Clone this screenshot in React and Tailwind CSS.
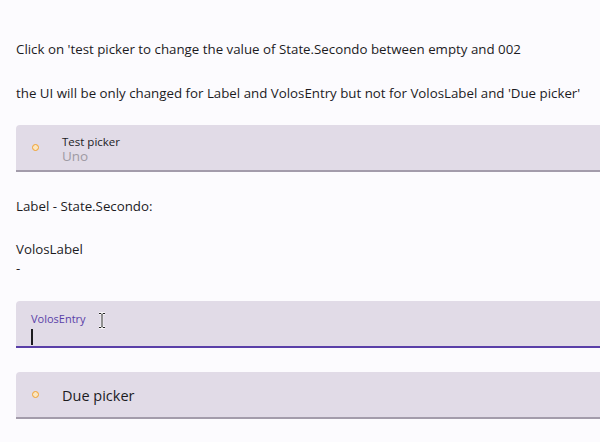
import React from 'react';

const font = { fontFamily: '"Open Sans", "Noto Sans", sans-serif' };

// piccolo anello arancione dei picker
const Dot = () => (
  <span className="block h-[7px] w-[7px] rounded-full border-[1.5px] border-[#f0a030] bg-[#fbe6c0]" />
);

const PickerBox = ({ children, className }) => (
  <div className={`ml-4 flex items-center rounded-tl-[4px] bg-[#e1dbe7] border-b-2 border-[#a39cab] ${className}`}>
    <div className="w-[46px] flex justify-start pl-[16px]">
      <Dot />
    </div>
    {children}
  </div>
);

export default function App() {
  return (
    <div className="w-[600px] h-[442px] overflow-hidden bg-[#fcfbfe] text-[#1c1b1f]" style={font}>
      <p className="pl-4 pt-[39px] text-[13.3px] leading-[20px] whitespace-nowrap">
        Click on 'test picker to change the value of State.Secondo between empty and 002
      </p>
      <p className="pl-4 mt-[24px] text-[13.3px] leading-[20px] whitespace-nowrap">
        the UI will be only changed for Label and VolosEntry but not for VolosLabel and 'Due picker'
      </p>

      <PickerBox className="mt-[22px] h-[47px]">
        <div className="flex flex-col pt-[3px]">
          <span className="text-[11.5px] leading-[15px] text-[#1c1b1f]">Test picker</span>
          <span className="text-[13.5px] leading-[15px] text-[#9e9aa3]">Uno</span>
        </div>
      </PickerBox>

      <p className="pl-4 mt-[24px] text-[13.3px] leading-[20px]">Label - State.Secondo:</p>

      <p className="pl-4 mt-[23px] text-[13.3px] leading-[20px]">VolosLabel</p>
      <p className="pl-4 text-[13.3px] leading-[19px]">-</p>

      <div className="ml-4 mt-[23px] h-[47px] rounded-tl-[4px] bg-[#e1dbe7] border-b-2 border-[#5a3fa8] pl-[15px] pt-[11px] relative">
        <span className="block text-[11px] leading-[14px] text-[#5a3fa8]">VolosEntry</span>
        <span className="block mt-[3px] h-[16px] w-[1.5px] bg-[#1c1b1f]" />
        {/* cursore I-beam del mouse */}
        <svg className="absolute left-[82px] top-[11px]" width="8" height="17" viewBox="0 0 8 17">
          <path d="M1 1.5h2l1 1 1-1h2M4 2.5v12M1 15.5h2l1-1 1 1h2" fill="none" stroke="#fff" strokeWidth="2.5" />
          <path d="M1 1.5h2l1 1 1-1h2M4 2.5v12M1 15.5h2l1-1 1 1h2" fill="none" stroke="#222" strokeWidth="1" />
        </svg>
      </div>

      <PickerBox className="mt-[24px] h-[47px]">
        <span className="text-[14.5px] leading-[20px] text-[#1c1b1f] pt-[2px]">Due picker</span>
      </PickerBox>
    </div>
  );
}
